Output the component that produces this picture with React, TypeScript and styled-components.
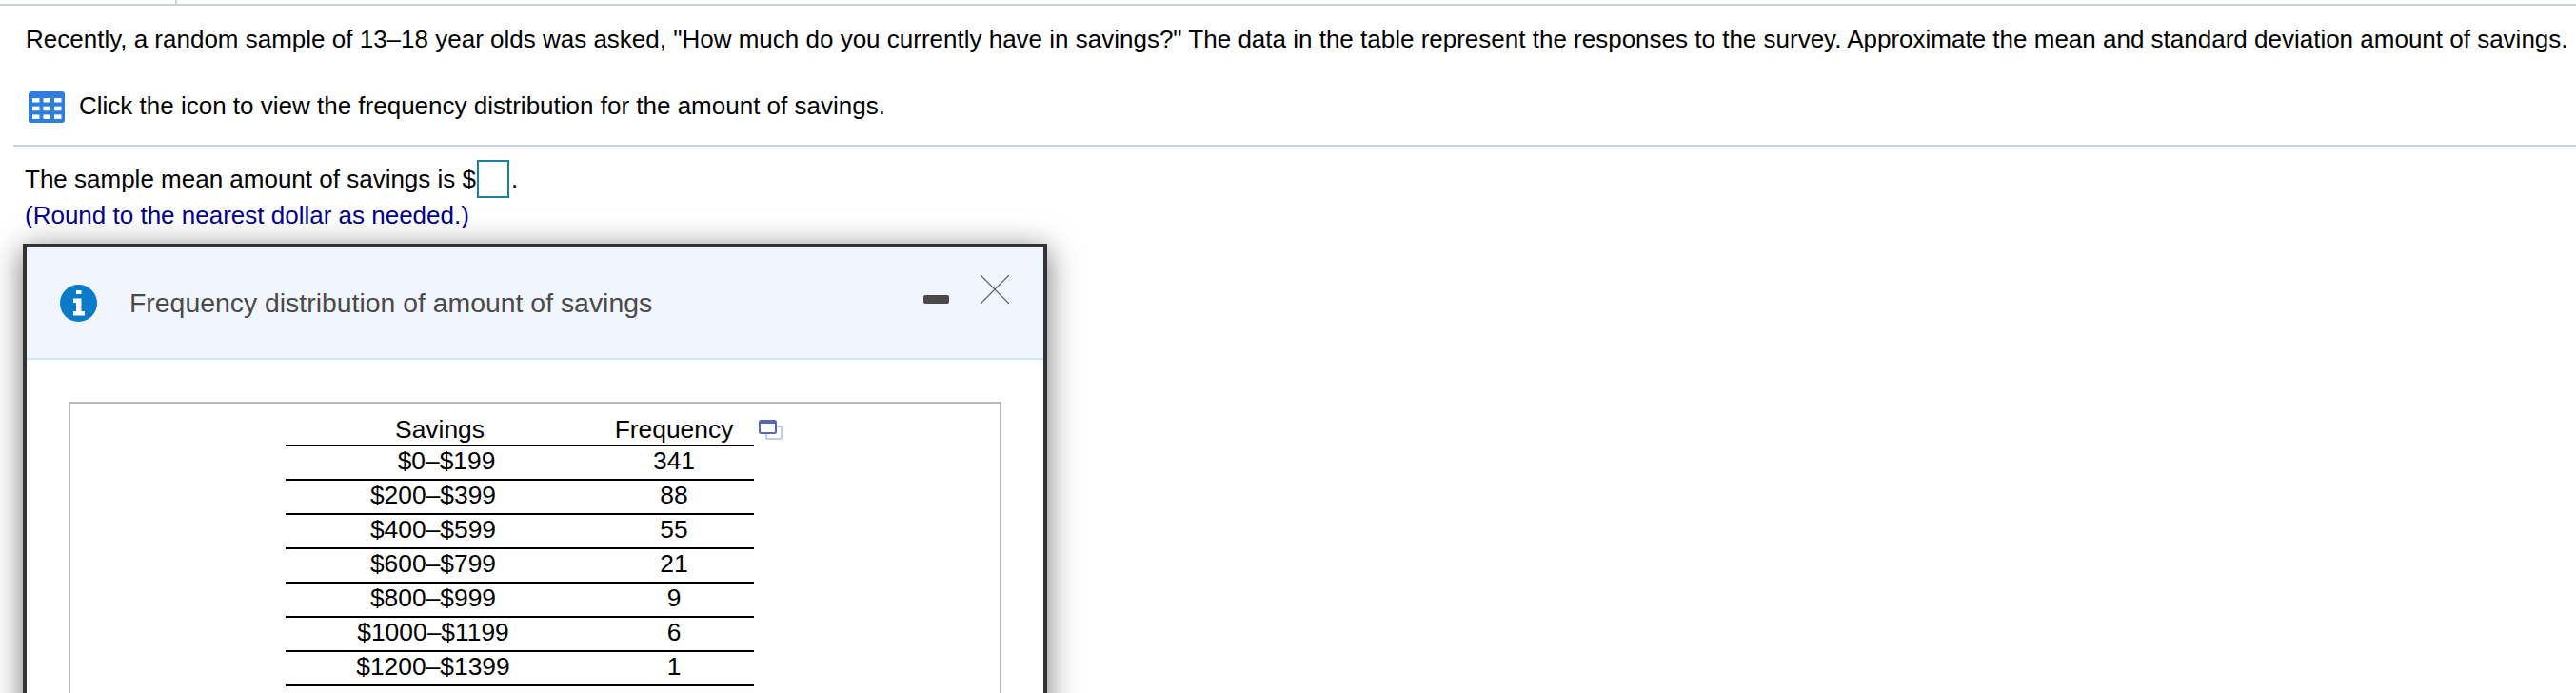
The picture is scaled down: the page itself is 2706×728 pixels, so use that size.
import styled, { createGlobalStyle } from "styled-components";

const GlobalStyle = createGlobalStyle`
  html, body {
    margin: 0;
    height: 728px;
    overflow: hidden;
    background: #fff;
    font-family: "Liberation Sans", Arial, sans-serif;
    color: #000;
  }
`;

const Page = styled.div`
  position: relative;
  width: 2706px;
  height: 728px;
  overflow: hidden;
`;

const TopBar = styled.div`
  position: relative;
  height: 4px;
  border-bottom: 2px solid #ccd1e0;
  &::before {
    content: "";
    position: absolute;
    left: 184px;
    top: 0;
    width: 2px;
    height: 4px;
    background: #ccd1e0;
  }
`;

const Question = styled.div`
  padding: 0 0 0 14px;
`;

const Prompt = styled.p`
  margin: 0;
  padding: 20px 0 0 27px;
  font-size: 26px;
  line-height: 30px;
  white-space: nowrap;
`;

const IconRow = styled.div`
  display: flex;
  align-items: center;
  gap: 15px;
  height: 33px;
  margin-top: 40px;
  padding-left: 16px;
  font-size: 26px;
  white-space: nowrap;
`;

const IconRowText = styled.span`
  margin-bottom: 2px;
`;

const Divider = styled.div`
  height: 2px;
  margin-top: 23px;
  background: #ccd1e0;
`;

const AnswerLine = styled.div`
  display: flex;
  align-items: center;
  height: 40px;
  margin-top: 14px;
  padding-left: 12px;
  font-size: 26px;
  white-space: nowrap;
`;

const AnswerBox = styled.span`
  box-sizing: border-box;
  display: block;
  width: 34px;
  height: 40px;
  margin: 0 2px 0 1px;
  background: #fff;
  border: 2px solid #1b7f9e;
`;

const Hint = styled.div`
  padding: 3px 0 0 12px;
  font-size: 26px;
  line-height: 30px;
  color: #00008b;
  white-space: nowrap;
`;

const Dialog = styled.section`
  position: absolute;
  left: 24px;
  top: 256px;
  box-sizing: border-box;
  width: 1076px;
  height: 560px;
  background: #fff;
  border: 4px solid #333;
  box-shadow: 0 6px 30px rgba(0, 0, 0, 0.55);
`;

const DialogHeader = styled.header`
  display: flex;
  align-items: center;
  box-sizing: border-box;
  height: 118px;
  padding: 0 36px 0 35px;
  background: #f1f6fe;
  border-bottom: 2px solid #cfe6f8;
`;

const DialogTitle = styled.h2`
  flex: 1;
  margin: 1px 0 0 34px;
  font-size: 28.4px;
  font-weight: 400;
  color: #4a4a4a;
  white-space: nowrap;
`;

const MinimizeIcon = styled.span`
  display: block;
  width: 27px;
  height: 9px;
  margin: 0 33px 7px 0;
  border-radius: 2px;
  background: #4a4a4a;
`;

const CloseIcon = styled.svg`
  display: block;
  width: 30px;
  height: 30px;
  margin-bottom: 28px;
`;

const DialogBody = styled.div`
  padding: 44px 44px 0;
`;

const TableFrame = styled.div`
  box-sizing: border-box;
  height: 400px;
  padding: 0 0 0 226px;
  border: 2px solid #b8b8b8;
  display: flex;
  align-items: flex-start;
`;

const DataTable = styled.table`
  width: 492px;
  border-collapse: collapse;
  table-layout: fixed;
  font-size: 26.4px;
`;

const HeadCell = styled.th<{ $w: number }>`
  width: ${(p) => p.$w}px;
  height: 44px;
  padding: 11px 0 0;
  box-sizing: border-box;
  font-weight: 400;
  text-align: center;
  border-bottom: 2px solid #000;
`;

// the range column is not quite centred under its heading in the source table
const Cell = styled.td<{ $shift?: number }>`
  height: 30px;
  padding: 0 ${(p) => (p.$shift && p.$shift < 0 ? -p.$shift * 2 : 0)}px 4px ${(p) => (p.$shift && p.$shift > 0 ? p.$shift * 2 : 0)}px;
  text-align: center;
  line-height: 30px;
  border-bottom: 2px solid #000;
`;

const CopyIcon = styled.svg`
  display: block;
  width: 25px;
  height: 21px;
  margin: 17px 0 0 5px;
`;

const rows: [string, number, number][] = [
  ["$0–$199", 341, 7],
  ["$200–$399", 88, -7],
  ["$400–$599", 55, -7],
  ["$600–$799", 21, -7],
  ["$800–$999", 9, -7],
  ["$1000–$1199", 6, -7],
  ["$1200–$1399", 1, -7],
];

function GridIcon() {
  const cells = [];
  for (let r = 0; r < 3; r++) {
    for (let c = 0; c < 3; c++) {
      cells.push(
        <rect key={`${r}-${c}`} x={4 + c * 11.5} y={7 + r * 8.7} width={7.5} height={4.5} fill="#fff" />
      );
    }
  }
  return (
    <svg width="38" height="33" viewBox="0 0 38 33" style={{ display: "block", flex: "none" }}>
      <defs>
        <filter id="soft" x="-5%" y="-5%" width="110%" height="110%">
          <feGaussianBlur stdDeviation="0.7" />
        </filter>
      </defs>
      <rect width="38" height="33" rx="3" fill="#2f7ede" />
      <g filter="url(#soft)">{cells}</g>
    </svg>
  );
}

function InfoIcon() {
  return (
    <svg width="39" height="39" viewBox="0 0 39 39" style={{ display: "block", flex: "none" }}>
      <circle cx="19.5" cy="19.5" r="19.5" fill="#0a7acb" />
      <rect x="17" y="6" width="5.5" height="4" fill="#fff" />
      <path d="M14 14.5h8.500v13.500h3.500v4.500H14v-4.500h3v-9h-3z" fill="#fff" />
    </svg>
  );
}

export default function App() {
  return (
    <Page>
      <GlobalStyle />
      <TopBar />
      <Prompt>
        Recently, a random sample of 13–18 year olds was asked, "How much do you currently have in savings?" The data in
        the table represent the responses to the survey. Approximate the mean and standard deviation amount of savings.
      </Prompt>
      <Question>
        <IconRow>
          <GridIcon />
          <IconRowText>Click the icon to view the frequency distribution for the amount of savings.</IconRowText>
        </IconRow>
        <Divider />
        <AnswerLine>
          The sample mean amount of savings is $<AnswerBox />.
        </AnswerLine>
        <Hint>(Round to the nearest dollar as needed.)</Hint>
      </Question>
      <Dialog>
        <DialogHeader>
          <InfoIcon />
          <DialogTitle>Frequency distribution of amount of savings</DialogTitle>
          <MinimizeIcon />
          <CloseIcon viewBox="0 0 30 30">
            <path d="M0 0L30 30M30 0L0 30" stroke="#555" strokeWidth="1.2" fill="none" />
          </CloseIcon>
        </DialogHeader>
        <DialogBody>
          <TableFrame>
            <DataTable>
              <thead>
                <tr>
                  <HeadCell $w={324}>Savings</HeadCell>
                  <HeadCell $w={168}>Frequency</HeadCell>
                </tr>
              </thead>
              <tbody>
                {rows.map(([range, freq, shift]) => (
                  <tr key={range}>
                    <Cell $shift={shift}>{range}</Cell>
                    <Cell>{freq}</Cell>
                  </tr>
                ))}
              </tbody>
            </DataTable>
            <CopyIcon viewBox="0 0 25 21">
              <rect x="8" y="7" width="16" height="13" rx="1" fill="#fff" stroke="#c3cbe8" strokeWidth="2" />
              <rect x="1" y="1" width="17" height="13" rx="1.500" fill="#fff" stroke="#5468b4" strokeWidth="2" />
              <rect x="1" y="1" width="17" height="3" fill="#5468b4" />
            </CopyIcon>
          </TableFrame>
        </DialogBody>
      </Dialog>
    </Page>
  );
}
